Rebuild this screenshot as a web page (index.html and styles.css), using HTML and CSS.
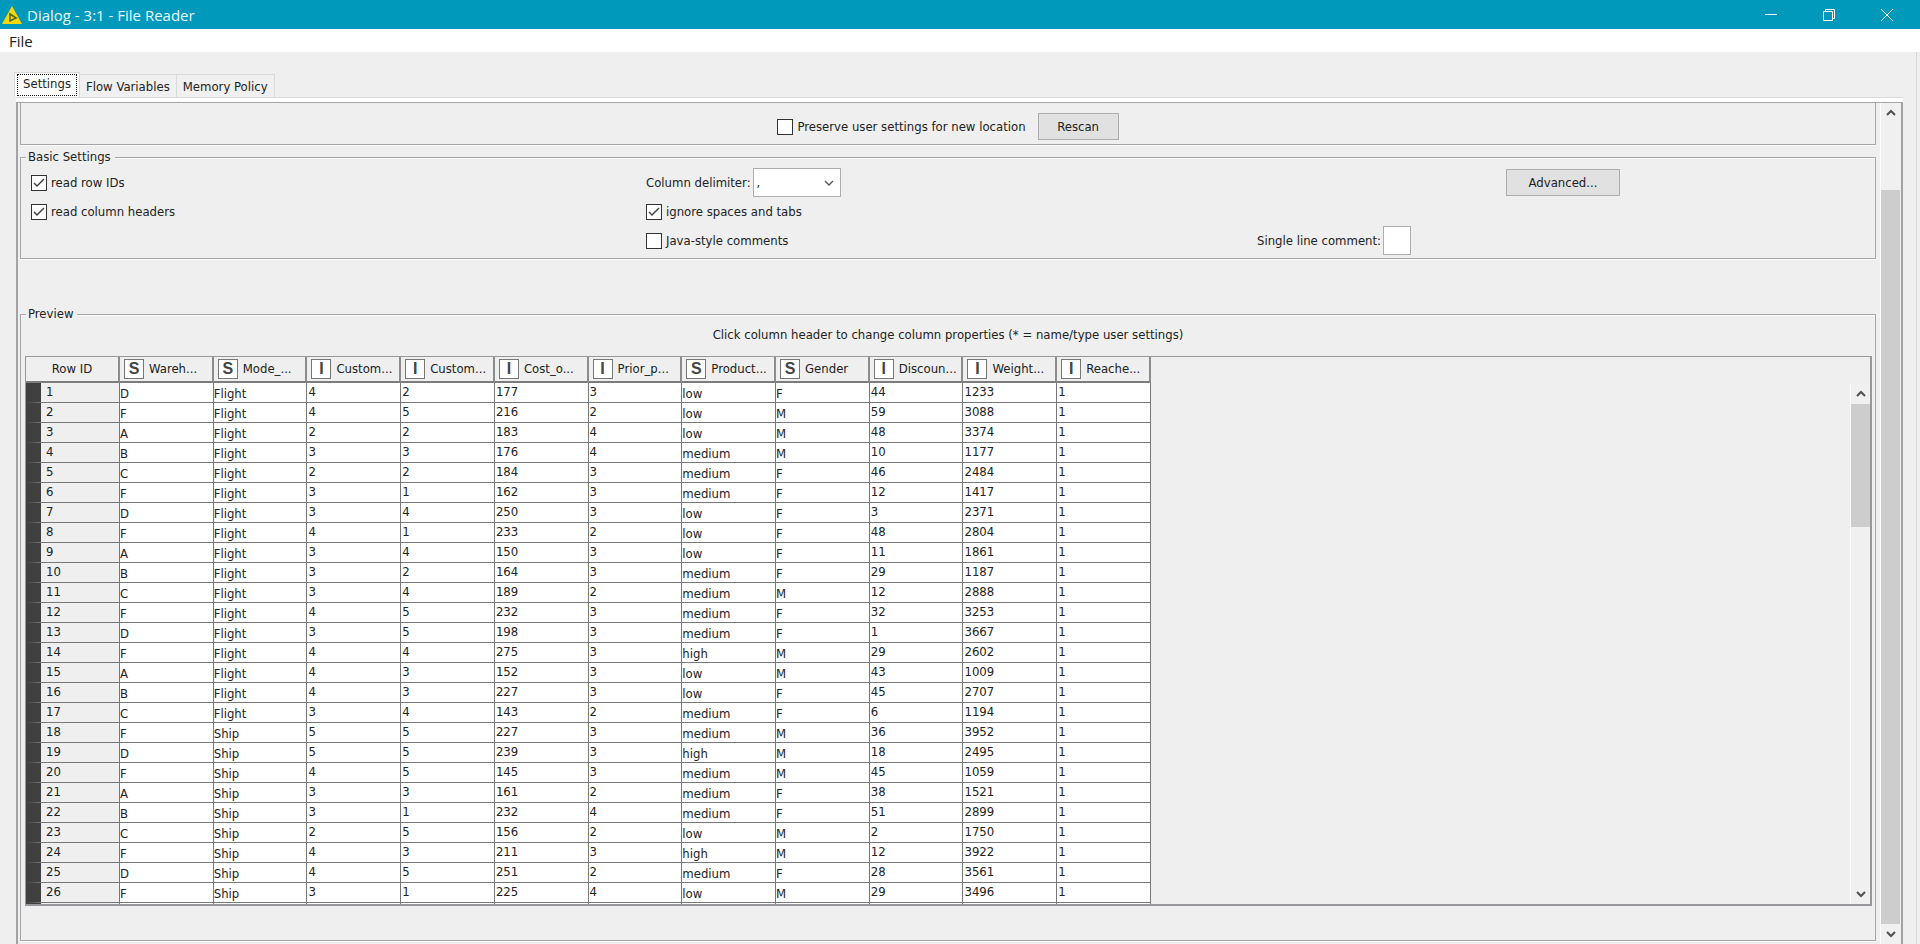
FILE: index.html
```html
<!DOCTYPE html>
<html lang="en">
<head>
    <meta charset="UTF-8">
    <title>Dialog - 3:1 - File Reader</title>
    <link rel="stylesheet" href="styles.css">
</head>
<body>
    <header class="titlebar">
        <svg class="logo" width="20" height="18" viewBox="0 0 20 18">
            <path d="M10 0 L20 18 H0 Z" fill="#f7d708"/>
            <path d="M8 8 L14 12 L8 15 Z" fill="#f7d708" stroke="#4a6a20" stroke-width="1.6"/>
        </svg>
        <span class="title">Dialog - 3:1 - File Reader</span>
        <div class="window-buttons">
            <button type="button" aria-label="Minimize">
                <svg width="14" height="14" viewBox="0 0 14 14"><path d="M1 6.5 H13"/></svg>
            </button>
            <button type="button" aria-label="Restore">
                <svg width="14" height="14" viewBox="0 0 14 14"><path d="M1.5 3.5 H10.5 V12.5 H1.5 Z M3.5 3.5 V1.5 H12.5 V10.5 H10.5"/></svg>
            </button>
            <button type="button" aria-label="Close">
                <svg width="14" height="14" viewBox="0 0 14 14"><path d="M1 1 L13 13 M13 1 L1 13"/></svg>
            </button>
        </div>
    </header>

    <nav class="menubar"><button type="button">File</button></nav>

    <main class="dialog">
        <div class="tabs" role="tablist">
            <button type="button" role="tab" class="tab active" aria-selected="true"><span>Settings</span></button>
            <button type="button" role="tab" class="tab">Flow Variables</button>
            <button type="button" role="tab" class="tab">Memory Policy</button>
        </div>

        <div class="pane">
            <div class="scroll-view">
                <section class="location">
                    <label class="check"><input type="checkbox">Preserve user settings for new location</label>
                    <button type="button" class="btn rescan">Rescan</button>
                </section>

                <fieldset class="group basic">
                    <legend>Basic Settings</legend>
                    <div class="settings">
                        <div class="cell"><label class="check"><input type="checkbox" checked>read row IDs</label></div>
                        <div class="cell">
                            <label for="delimiter">Column delimiter:</label>
                            <select id="delimiter"><option>,</option><option>;</option></select>
                        </div>
                        <div class="cell center"><button type="button" class="btn advanced">Advanced...</button></div>

                        <div class="cell"><label class="check"><input type="checkbox" checked>read column headers</label></div>
                        <div class="cell"><label class="check"><input type="checkbox" checked>ignore spaces and tabs</label></div>
                        <div class="cell"></div>

                        <div class="cell"></div>
                        <div class="cell"><label class="check"><input type="checkbox">Java-style comments</label></div>
                        <div class="cell">
                            <label for="comment">Single line comment:</label>
                            <input type="text" id="comment">
                        </div>
                    </div>
                </fieldset>

                <fieldset class="group preview">
                    <legend>Preview</legend>
                    <p class="hint">Click column header to change column properties (* = name/type user settings)</p>
                    <div class="table-box">
                        <div class="table-view">
                            <table>
                                <thead><tr id="head"></tr></thead>
                                <tbody id="rows"></tbody>
                            </table>
                        </div>
                        <div class="scrollbar inner">
                            <svg class="arrow" width="10" height="8" viewBox="0 0 10 8"><path d="M1 6 L5 2 L9 6"/></svg>
                            <div class="thumb"></div>
                            <svg class="arrow" width="10" height="8" viewBox="0 0 10 8"><path d="M1 2 L5 6 L9 2"/></svg>
                        </div>
                    </div>
                </fieldset>
            </div>
            <div class="scrollbar outer">
                <svg class="arrow" width="10" height="8" viewBox="0 0 10 8"><path d="M1 6 L5 2 L9 6"/></svg>
                <div class="thumb"></div>
                <svg class="arrow" width="10" height="8" viewBox="0 0 10 8"><path d="M1 2 L5 6 L9 2"/></svg>
            </div>
        </div>
    </main>

    <script src="script.js"></script>
</body>
</html>
```
FILE: styles.css
```css
* { box-sizing: border-box; }

body {
    margin: 0;
    height: 100vh;
    display: flex;
    flex-direction: column;
    overflow: hidden;
    background: #efefef;
    color: #222;
    font-family: "DejaVu Sans Condensed", "DejaVu Sans", sans-serif;
    font-size: 13px;
    line-height: 16px;
}

button, input, select { font: inherit; color: inherit; }

/* window frame */
.titlebar {
    display: flex;
    align-items: center;
    flex: none;
    height: 29px;
    padding-left: 2px;
    background: #0099bc;
    color: #e8fbff;
    font-family: "Open Sans", sans-serif;
    font-size: 15px;
}
.logo { margin-top: 1px; }
.title { margin-left: 5px; }
.window-buttons { display: flex; margin-left: auto; margin-right: 4px; }
.window-buttons button {
    display: flex;
    align-items: center;
    justify-content: center;
    width: 58px;
    height: 28px;
    padding: 0;
    border: 0;
    background: none;
}
.window-buttons path { fill: none; stroke: #fff; stroke-width: 1; }

.menubar { flex: none; height: 23px; background: #fff; }
.menubar button {
    height: 23px;
    padding: 1px 9px;
    border: 0;
    background: none;
    font-family: "Open Sans", sans-serif;
    font-size: 15px;
}

.dialog {
    display: flex;
    flex-direction: column;
    flex: 1;
    min-height: 0;
    margin: 0 3px 0 0;
    padding: 20px 13px 0 14px;
    border-right: 1px solid #d8d8d8;
}

/* tabs */
.tabs { display: flex; align-items: flex-end; flex: none; height: 25px; }
.tab {
    height: 23px;
    padding: 2px 6px 0 6px;
    border: 1px solid #d9d9d9;
    border-left: 0;
    border-bottom: 0;
    background: #f0f0f0;
    white-space: nowrap;
}
.tab.active {
    height: 25px;
    padding: 0 2px;
    border-left: 1px solid #d9d9d9;
    background: #fff;
}
.tab.active span {
    display: block;
    height: 22px;
    padding: 1px 5px;
    border: 1px dotted #111;
}

.pane {
    display: flex;
    flex: 1;
    min-height: 0;
    margin-left: 2px;
    border: 2px solid #a3a3a7;
    border-top-width: 1px;
    border-bottom: 0;
    box-shadow: 0 -4px #fff, 0 -5px #d9d9d9;
    margin-top: 5px;
}
.scroll-view {
    display: flex;
    flex-direction: column;
    flex: 1;
    min-width: 0;
    padding: 0 4px 3px 2px;
}

/* groups */
.location {
    display: flex;
    align-items: center;
    justify-content: center;
    flex: none;
    gap: 12px;
    height: 42px;
    padding-top: 6px;
    border: 1px solid #a6a6a6;
    border-top: 0;
    box-shadow: 0 1px #fafafa;
}
.group {
    min-width: 0;
    margin: 0;
    padding: 0;
    border: 1px solid #a6a6a6;
    box-shadow: 0 1px #fafafa, inset 0 1px #fafafa;
}
.group legend {
    margin-left: 5px;
    padding: 0 4px 0 2px;
    background: #efefef;
}
.basic { flex: none; height: 110px; margin-top: 4px; }
.preview {
    display: flex;
    flex-direction: column;
    flex: 1;
    min-height: 0;
    margin-top: 47px;
}

.settings {
    display: grid;
    grid-template-columns: repeat(3, 1fr);
    grid-auto-rows: 29px;
    padding-top: 3px;
}
.cell { display: flex; align-items: center; gap: 2px; padding-left: 7px; }
.cell:nth-child(3n+1) { padding-left: 10px; }
.cell:nth-child(3n) { padding-left: 0; }
.cell.center { justify-content: center; padding-right: 6px; }

.check { display: flex; align-items: center; gap: 4px; }
.check input {
    appearance: none;
    width: 16px;
    height: 16px;
    margin: 0;
    border: 1px solid #333;
    background: #fff;
}
.check input:checked {
    background: #fff url("data:image/svg+xml,%3Csvg xmlns='http://www.w3.org/2000/svg' viewBox='0 0 14 14'%3E%3Cpath d='M2 7 L5 10 L12 3' fill='none' stroke='%23444' stroke-width='1.5'/%3E%3C/svg%3E");
}

.btn {
    height: 27px;
    padding: 0;
    border: 1px solid #adadad;
    background: #e1e1e1;
}
.rescan { width: 81px; }
.advanced { width: 114px; }

select {
    appearance: none;
    width: 88px;
    height: 29px;
    padding: 0 3px;
    border: 1px solid #adadad;
    border-radius: 0;
    background: #fff url("data:image/svg+xml,%3Csvg xmlns='http://www.w3.org/2000/svg' width='10' height='6' viewBox='0 0 10 6'%3E%3Cpath d='M1 1 L5 5 L9 1' fill='none' stroke='%23555' stroke-width='1.4'/%3E%3C/svg%3E") no-repeat right 6px center;
}
#comment {
    width: 28px;
    height: 29px;
    padding: 0 3px;
    border: 1px solid #adadad;
    background: #fff;
}

/* preview table */
.hint { margin: 5px 0 13px; text-align: center; }
.table-box {
    display: flex;
    height: 550px;
    margin: 0 3px 0 4px;
    border: 1px solid #98989c;
    border-right-width: 2px;
    border-bottom-width: 2px;
}
.table-view { flex: 1; min-width: 0; overflow: hidden; }

table {
    width: 1125px;
    table-layout: fixed;
    border-collapse: separate;
    border-spacing: 0;
}
th {
    height: 26px;
    padding: 0 0 0 4px;
    border-right: 2px solid #8c8c8c;
    border-bottom: 2px solid #7c7c7c;
    background: #efefef;
    font-weight: normal;
    text-align: left;
    white-space: nowrap;
}
th:first-child { width: 94px; padding: 0; text-align: center; }
th .col { display: flex; align-items: center; gap: 5px; }
th .type {
    width: 20px;
    height: 20px;
    border: 1px solid #777;
    background: #fff;
    color: #444;
    font: bold 16px/18px "Liberation Sans", sans-serif;
    text-align: center;
}
td {
    height: 20px;
    padding: 0 0 2px 1px;
    border-right: 1px solid #777;
    border-bottom: 1px solid #777;
    background: #fff;
    line-height: 17px;
    white-space: nowrap;
    overflow: hidden;
}
td.text { padding: 2px 0 0; }
td.row-id {
    padding-left: 5px;
    border-left: 15px solid #404040;
    background: #efefef;
}

/* scrollbars */
.scrollbar {
    display: flex;
    flex-direction: column;
    align-items: center;
    flex: none;
    width: 20px;
    border-left: 1px solid #fff;
    background: #f0f0f0;
}
.scrollbar .arrow { flex: none; margin: 6px 0; }
.scrollbar path { fill: none; stroke: #505050; stroke-width: 2; }
.scrollbar .thumb { width: 100%; background: #cdcdcd; }
.scrollbar.inner { margin-top: 27px; }
.scrollbar.inner .thumb { height: 123px; margin-bottom: auto; }
.scrollbar.outer { width: 21px; padding-right: 1px; }
.scrollbar.outer .thumb { flex: 1; margin-top: 67px; }
```
FILE: script.js
```js
const columns = [
    ["S", "Wareh..."], ["S", "Mode_..."], ["I", "Custom..."], ["I", "Custom..."],
    ["I", "Cost_o..."], ["I", "Prior_p..."], ["S", "Product..."], ["S", "Gender"],
    ["I", "Discoun..."], ["I", "Weight..."], ["I", "Reache..."]
];

const data = `D Flight 4 2 177 3 low F 44 1233 1
F Flight 4 5 216 2 low M 59 3088 1
A Flight 2 2 183 4 low M 48 3374 1
B Flight 3 3 176 4 medium M 10 1177 1
C Flight 2 2 184 3 medium F 46 2484 1
F Flight 3 1 162 3 medium F 12 1417 1
D Flight 3 4 250 3 low F 3 2371 1
F Flight 4 1 233 2 low F 48 2804 1
A Flight 3 4 150 3 low F 11 1861 1
B Flight 3 2 164 3 medium F 29 1187 1
C Flight 3 4 189 2 medium M 12 2888 1
F Flight 4 5 232 3 medium F 32 3253 1
D Flight 3 5 198 3 medium F 1 3667 1
F Flight 4 4 275 3 high M 29 2602 1
A Flight 4 3 152 3 low M 43 1009 1
B Flight 4 3 227 3 low F 45 2707 1
C Flight 3 4 143 2 medium F 6 1194 1
F Ship 5 5 227 3 medium M 36 3952 1
D Ship 5 5 239 3 high M 18 2495 1
F Ship 4 5 145 3 medium M 45 1059 1
A Ship 3 3 161 2 medium F 38 1521 1
B Ship 3 1 232 4 medium F 51 2899 1
C Ship 2 5 156 2 low M 2 1750 1
F Ship 4 3 211 3 high M 12 3922 1
D Ship 4 5 251 2 medium F 28 3561 1
F Ship 3 1 225 4 low M 29 3496 1`;

document.getElementById("head").innerHTML = "<th>Row ID</th>" + columns.map(([type, name]) =>
    `<th><div class="col"><span class="type">${type}</span>${name}</div></th>`).join("");

document.getElementById("rows").innerHTML = data.split("\n").map((line, i) => {
    const cells = line.split(" ").map((value, c) =>
        `<td class="${columns[c][0] === "S" ? "text" : "num"}">${value}</td>`).join("");
    return `<tr><td class="row-id">${i + 1}</td>${cells}</tr>`;
}).join("") + `<tr><td class="row-id"></td>${"<td></td>".repeat(columns.length)}</tr>`;
```
